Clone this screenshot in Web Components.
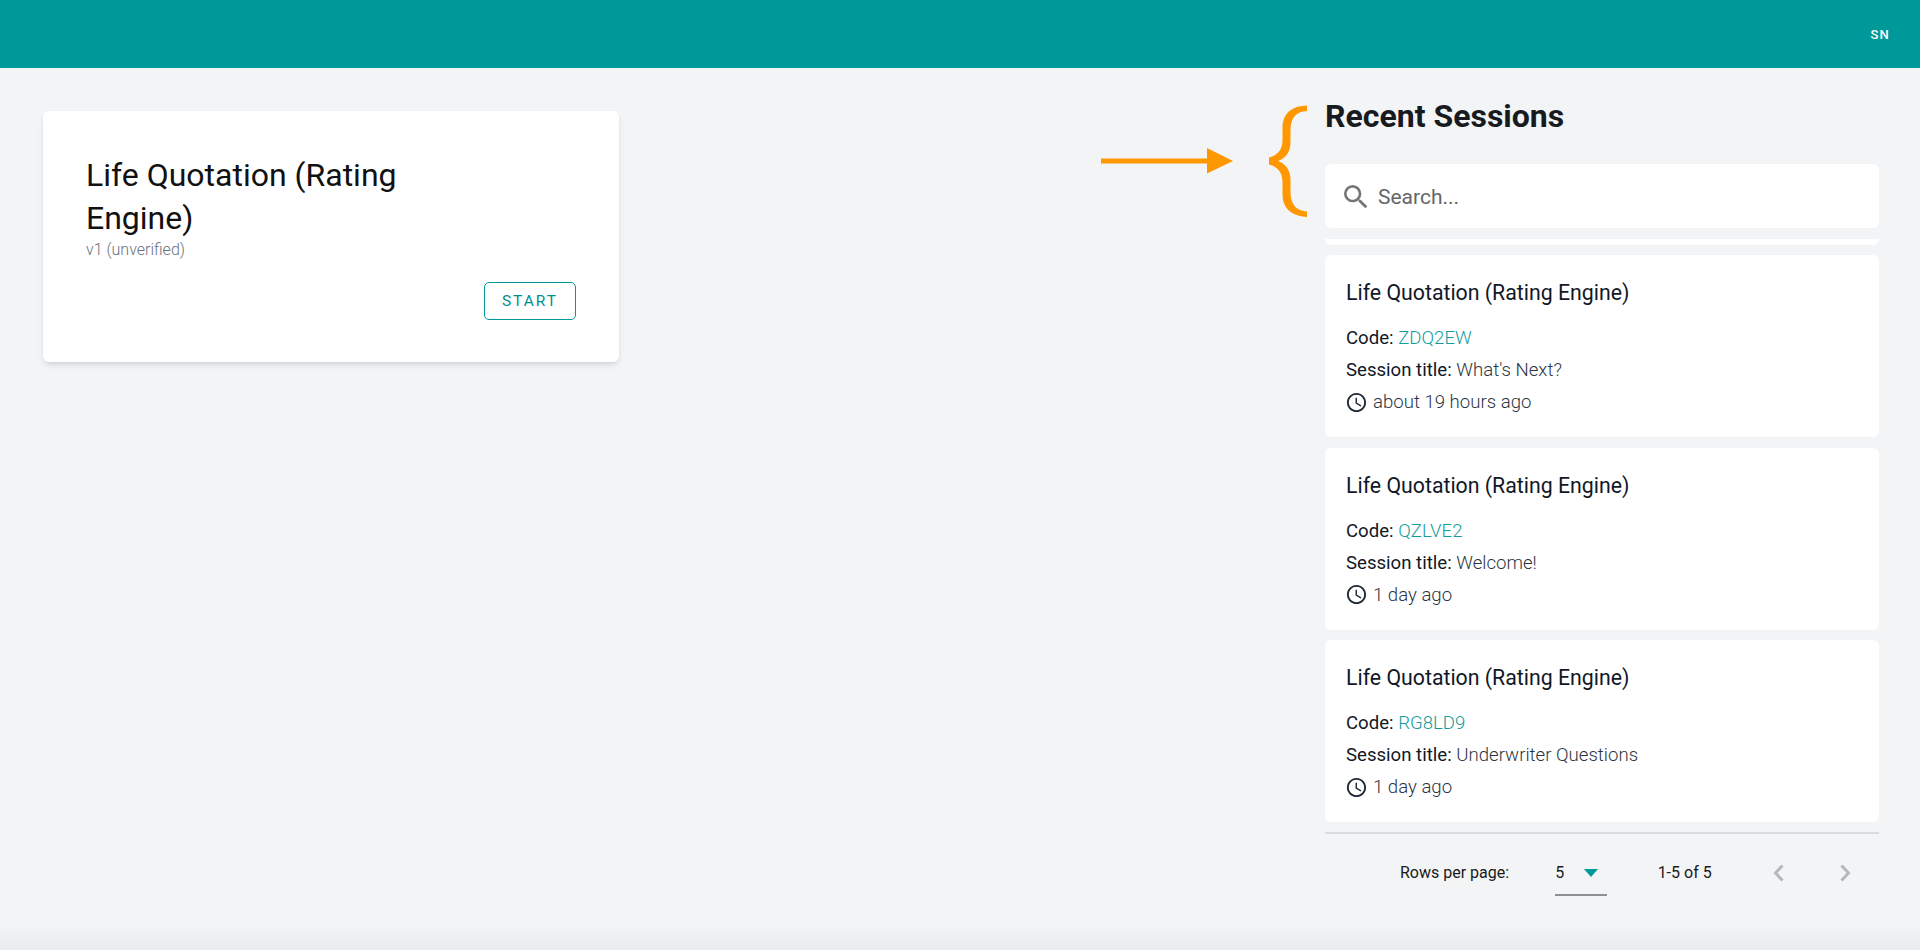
<!DOCTYPE html>
<html lang="en">
<head>
<meta charset="utf-8">
<title>Sessions</title>
<style>
  html, body { margin: 0; height: 950px; overflow: hidden; }
  body {
    font-family: Roboto, "Liberation Sans", sans-serif;
    background: linear-gradient(to bottom, #f3f4f6 0, #f3f4f6 925px, #eaebed 950px);
  }
</style>
</head>
<body>
<app-header initials="SN"></app-header>
<app-main>
  <quote-card slot="left" name="Life Quotation (Rating Engine)" version="v1 (unverified)"></quote-card>
  <recent-sessions slot="right">
    <session-card code="ZDQ2EW" session="What's Next?" time="about 19 hours ago"></session-card>
    <session-card code="QZLVE2" session="Welcome!" time="1 day ago"></session-card>
    <session-card code="RG8LD9" session="Underwriter Questions" time="1 day ago"></session-card>
  </recent-sessions>
</app-main>

<script>
class AppHeader extends HTMLElement {
  constructor() {
    super();
    const shadow = this.attachShadow({ mode: 'open' });
    shadow.innerHTML = `
      <style>
        :host {
          display: flex;
          justify-content: flex-end;
          align-items: center;
          height: 68px;
          padding-right: 30px;
          box-sizing: border-box;
          background-color: #009999;
          color: #fff;
          font-size: 13px;
          font-weight: 500;
          letter-spacing: 1.2px;
        }
      </style>
      <span>${this.getAttribute('initials')}</span>
    `;
  }
}

class AppMain extends HTMLElement {
  constructor() {
    super();
    const shadow = this.attachShadow({ mode: 'open' });
    shadow.innerHTML = `
      <style>
        :host {
          display: flex;
          justify-content: space-between;
          align-items: flex-start;
          padding: 0 41px 0 43px;
        }
      </style>
      <slot name="left"></slot>
      <slot name="right"></slot>
    `;
  }
}

class QuoteCard extends HTMLElement {
  constructor() {
    super();
    const shadow = this.attachShadow({ mode: 'open' });
    shadow.innerHTML = `
      <style>
        :host {
          display: block;
          box-sizing: border-box;
          width: 576px;
          height: 251px;
          margin-top: 43px;
          padding: 43px 43px 0;
          background: #fff;
          border-radius: 6px;
          box-shadow: 0 4px 6px -1px rgba(0,0,0,.1), 0 2px 4px -1px rgba(0,0,0,.06);
        }
        h2 {
          margin: 0;
          max-width: 340px;
          font-size: 32px;
          font-weight: 400;
          line-height: 43px;
          color: #111;
        }
        p {
          margin: 0;
          font-size: 16px;
          font-weight: 300;
          line-height: 20px;
          color: #6b7280;
        }
        .actions {
          display: flex;
          justify-content: flex-end;
          margin-top: 22px;
        }
        button {
          width: 92px;
          height: 38px;
          padding: 0;
          background: none;
          border: 1.5px solid #009999;
          border-radius: 5px;
          color: #008f8f;
          font: 400 15.500px Roboto, sans-serif;
          letter-spacing: 2px;
        }
      </style>
      <h2>${this.getAttribute('name')}</h2>
      <p>${this.getAttribute('version')}</p>
      <div class="actions"><button>START</button></div>
    `;
  }
}

class RecentSessions extends HTMLElement {
  constructor() {
    super();
    const shadow = this.attachShadow({ mode: 'open' });
    shadow.innerHTML = `
      <style>
        :host {
          display: block;
          position: relative;
          width: 554px;
        }
        h1 {
          margin: 0;
          height: 96px;
          padding-top: 26px;
          box-sizing: border-box;
          font-size: 32px;
          font-weight: 700;
          line-height: 44px;
          color: #171a1f;
        }
        .search {
          display: flex;
          align-items: center;
          box-sizing: border-box;
          height: 64px;
          padding: 2px 0 0 15px;
          gap: 6px;
          background: #fff;
          border-radius: 6px;
          color: #666;
          font-size: 21px;
        }
        .search svg { width: 32px; height: 32px; fill: #757575; }
        .sliver {
          height: 6px;
          margin: 11px 0 10px;
          background: #fff;
          border-radius: 0 0 6px 6px;
        }
        .list { display: grid; gap: 10.500px; }
        hr {
          margin: 10px 0 0;
          height: 2px;
          border: 0;
          background: #d8dadd;
        }
        .arrow { position: absolute; left: -224px; top: 80px; }
        .brace { position: absolute; left: -65px; top: 27px; }
      </style>
      <svg class="arrow" width="132" height="26" viewBox="0 0 132 26">
        <path fill="#ff9800" d="M0 10.5H106V0L132 13 106 25.500V15.500H0Z"/>
      </svg>
      <svg class="brace" width="50" height="130" viewBox="0 0 50 130">
        <path fill="#ff9800" d="M47 10.500C32 11 22.500 18 22.500 33V45C22.500 54 18 60.500 9 62.500V69.500C18 71.500 22.500 78 22.500 87V99C22.500 114 32 121 47 122V116.500C37 116 30.500 110 30.500 97V85C30.500 75 26 69 18 66C26 63 30.500 57 30.500 47V35C30.500 22 37 16.500 47 16Z"/>
      </svg>
      <h1>Recent Sessions</h1>
      <div class="search">
        <svg viewBox="0 0 24 24"><path d="M15.500 14h-.79l-.28-.27A6.470 6.470 0 0 0 16 9.500 6.500 6.500 0 1 0 9.500 16c1.610 0 3.090-.59 4.230-1.570l.27.28v.79l5 4.990L20.490 19l-4.990-5zm-6 0C7.010 14 5 11.990 5 9.500S7.010 5 9.500 5 14 7.010 14 9.500 11.990 14 9.500 14z"/></svg>
        <span>Search...</span>
      </div>
      <div class="sliver"></div>
      <div class="list"><slot></slot></div>
      <hr>
      <table-pager label="Rows per page:" rows="5" range="1-5 of 5"></table-pager>
    `;
  }
}

class SessionCard extends HTMLElement {
  constructor() {
    super();
    const shadow = this.attachShadow({ mode: 'open' });
    shadow.innerHTML = `
      <style>
        :host {
          display: block;
          box-sizing: border-box;
          height: 182px;
          padding: 24px 21px 0;
          background: #fff;
          border-radius: 6px;
          font-size: 18.600px;
          line-height: 32px;
          color: #111827;
        }
        h3 {
          margin: 0 0 15px;
          font-size: 21.300px;
          font-weight: 400;
          line-height: 28px;
        }
        .value { font-weight: 300; color: #2b3543; }
        .code { font-weight: 300; color: #149c9c; }
        .time { display: flex; align-items: center; gap: 5px; margin-left: -1px; font-weight: 300; color: #2b3543; }
        .time svg { width: 23px; height: 23px; fill: #1f2937; }
      </style>
      <h3>Life Quotation (Rating Engine)</h3>
      <div>Code: <span class="code">${this.getAttribute('code')}</span></div>
      <div>Session title: <span class="value">${this.getAttribute('session')}</span></div>
      <div class="time">
        <svg viewBox="0 0 24 24"><path d="M11.990 2C6.470 2 2 6.480 2 12s4.470 10 9.990 10C17.520 22 22 17.520 22 12S17.520 2 11.990 2zM12 20c-4.420 0-8-3.580-8-8s3.580-8 8-8 8 3.580 8 8-3.580 8-8 8zm.5-13H11v6l5.250 3.150.75-1.230-4.500-2.670z"/></svg>
        <span>${this.getAttribute('time')}</span>
      </div>
    `;
  }
}

class TablePager extends HTMLElement {
  constructor() {
    super();
    const shadow = this.attachShadow({ mode: 'open' });
    shadow.innerHTML = `
      <style>
        :host {
          display: flex;
          align-items: center;
          height: 77px;
          padding-left: 75px;
          font-size: 16px;
          color: #1a1a1a;
        }
        .rows {
          display: flex;
          align-items: center;
          box-sizing: border-box;
          width: 52px;
          height: 40px;
          margin-left: 46px;
          margin-top: 6px;
          padding-bottom: 4px;
          border-bottom: 2px solid #8f8f8f;
        }
        .caret { width: 14px; height: 8px; margin-left: 20px; }
        .range { margin-left: 50.500px; }
        .nav { width: 14px; height: 20px; fill: none; stroke: #b7b8ba; stroke-width: 3; }
        .prev { margin-left: 60px; }
        .next { margin-left: 52px; }
      </style>
      <span>${this.getAttribute('label')}</span>
      <div class="rows">
        <span>${this.getAttribute('rows')}</span>
        <svg class="caret" viewBox="0 0 14 8"><path fill="#009999" d="M0 0H14L7 8Z"/></svg>
      </div>
      <span class="range">${this.getAttribute('range')}</span>
      <svg class="nav prev" viewBox="0 0 14 20"><path d="M10.500 2.500L3.500 10l7 7.500"/></svg>
      <svg class="nav next" viewBox="0 0 14 20"><path d="M3.500 2.500l7 7.500-7 7.500"/></svg>
    `;
  }
}

customElements.define('app-header', AppHeader);
customElements.define('app-main', AppMain);
customElements.define('quote-card', QuoteCard);
customElements.define('recent-sessions', RecentSessions);
customElements.define('session-card', SessionCard);
customElements.define('table-pager', TablePager);
</script>
</body>
</html>
